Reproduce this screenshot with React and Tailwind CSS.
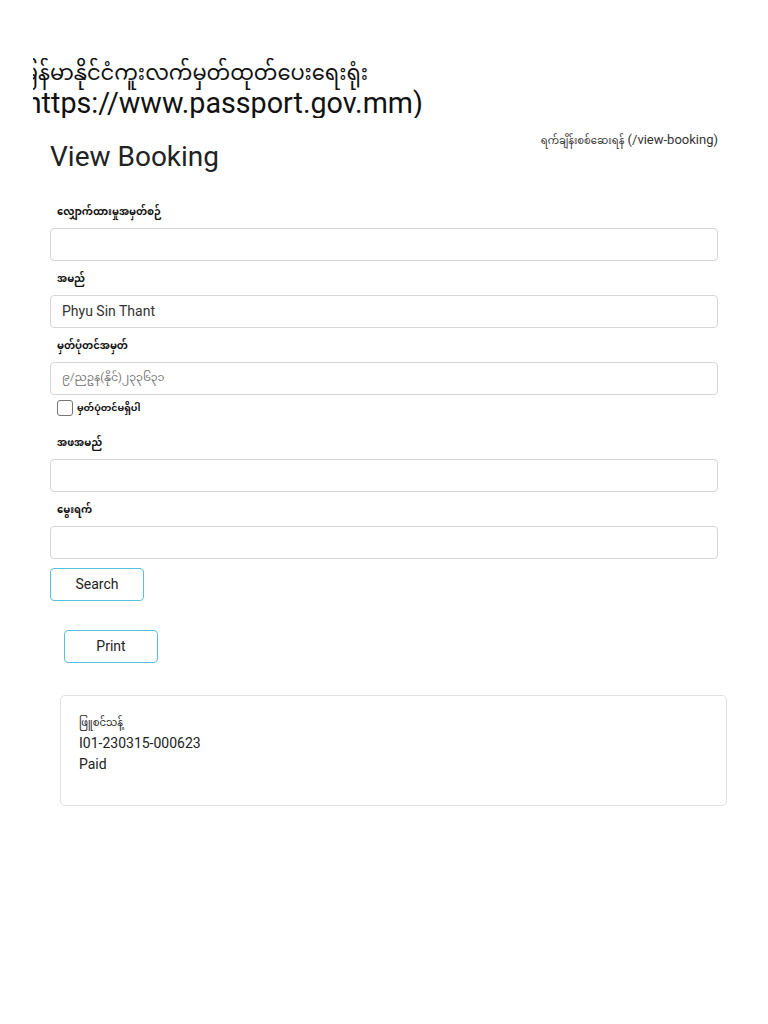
import React from "react";

const font = { fontFamily: "Roboto, 'Noto Sans Myanmar', 'Noto Sans', sans-serif" };

function Label({ children, className = "" }) {
  return (
    <div className={`pl-[7px] text-[10px] font-bold leading-[17px] text-[#111] ${className}`}>{children}</div>
  );
}

function Field({ value, placeholder }) {
  return (
    <div className="flex h-[33px] items-center rounded-[4px] border border-[#d6d6d6] bg-white px-[11px] text-[14px] text-[#333]">
      {value ? <span>{value}</span> : placeholder ? <span className="text-[11px] text-[#777]">{placeholder}</span> : null}
    </div>
  );
}

export default function App() {
  return (
    <div className="min-h-[1024px] w-[768px] bg-white text-[#222]" style={font}>
      <div className="pt-[58px] pl-[33px]">
        <div className="overflow-hidden">
          <div className="whitespace-nowrap text-[#111]">
            <div className="-ml-[14px] text-[21px] leading-[30px]">မြန်မာနိုင်ငံကူးလက်မှတ်ထုတ်ပေးရေးရုံး</div>
            <div className="-ml-[17px] text-[28.7px] leading-[30px]">(https://www.passport.gov.mm)</div>
          </div>
        </div>
      </div>

      <div className="px-[50px]">
        <div className="mt-[10px] flex items-start justify-between">
          <div className="pt-[12px] text-[28px] leading-[34px] text-[#222]">View Booking</div>
          <div className="pt-[3px] text-[13px] leading-[18px] text-[#333]">
            <span className="text-[10px]">ရက်ချိန်းစစ်ဆေးရန်</span> (/view-booking)
          </div>
        </div>

        <Label className="mt-[29px] mb-[8px]">လျှောက်ထားမှုအမှတ်စဉ်</Label>
        <Field />

        <Label className="mt-[9px] mb-[8px]">အမည်</Label>
        <Field value="Phyu Sin Thant" />

        <Label className="mt-[9px] mb-[8px]">မှတ်ပုံတင်အမှတ်</Label>
        <Field placeholder="၉/ညဥန(နိုင်)၂၃၃၆၃၁" />

        <div className="mt-[4px] flex items-center pl-[7px]">
          <span className="h-[16px] w-[16px] rounded-[3px] border border-[#767676] bg-white" />
          <span className="ml-[4px] text-[9.5px] font-bold leading-[18px] text-[#111]">မှတ်ပုံတင်မရှိပါ</span>
        </div>

        <Label className="mt-[17px] mb-[8px]">အဖအမည်</Label>
        <Field />

        <Label className="mt-[9px] mb-[8px]">မွေးရက်</Label>
        <Field />

        <button className="mt-[9px] flex h-[33px] w-[94px] items-center justify-center rounded-[4px] border border-[#5bc0de] bg-white text-[14px] text-[#222]">
          Search
        </button>

        <button className="ml-[14px] mt-[29px] flex h-[33px] w-[94px] items-center justify-center rounded-[4px] border border-[#5bc0de] bg-white text-[14px] text-[#222]">
          Print
        </button>

        <div className="ml-[10px] mr-[-9px] mt-[32px] h-[111px] rounded-[5px] border border-[#e2e2e2] bg-white px-[18px] pt-[16px] text-[14px] leading-[21px] text-[#222]">
          <div className="text-[10px] leading-[21px]">ဖြူစင်သန့်</div>
          <div>I01-230315-000623</div>
          <div>Paid</div>
        </div>
      </div>
    </div>
  );
}
